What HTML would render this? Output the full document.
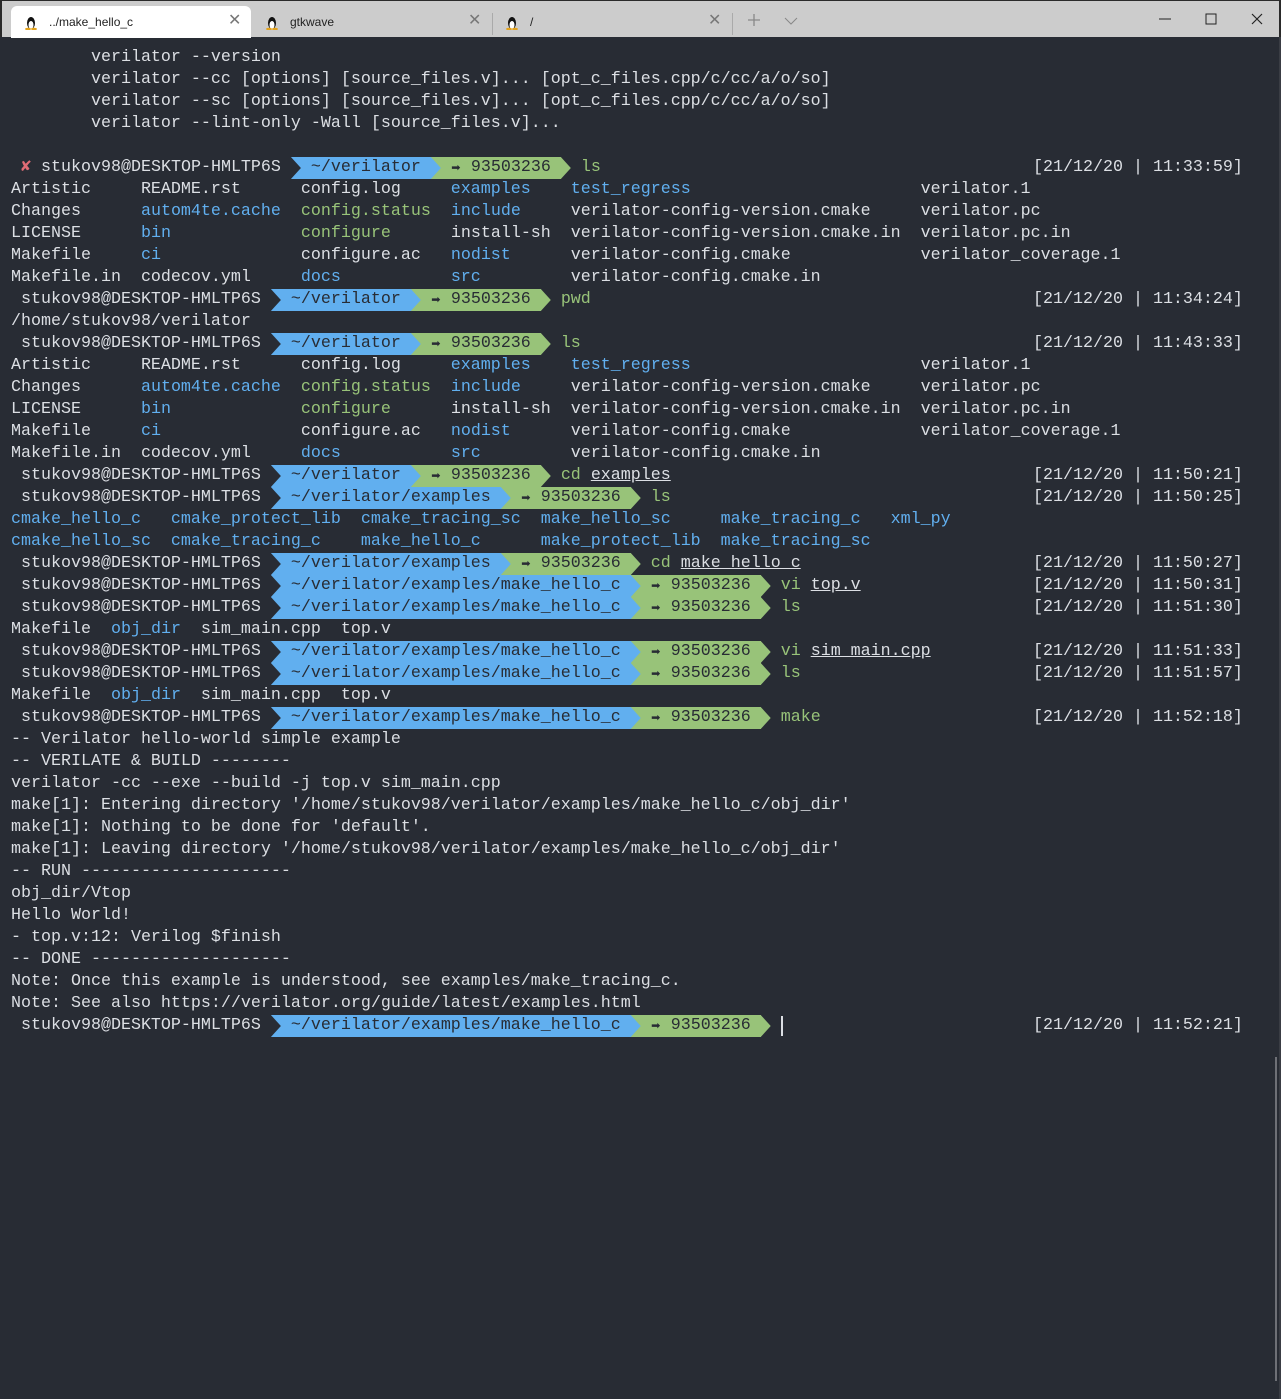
<!DOCTYPE html>
<html><head><meta charset="utf-8"><style>
*{margin:0;padding:0;box-sizing:border-box}
body{width:1281px;height:1399px;background:#282c34;position:relative;overflow:hidden;font-family:"Liberation Mono","DejaVu Sans Mono",monospace;}
#bar{position:absolute;left:0;top:0;width:1281px;height:37px;background:#cccccc;border-top:1px solid #2a2a2a;border-left:2px solid #2a2a2a;border-right:2px solid #2a2a2a}
.tab{position:absolute;top:5px;height:32px;font-family:"Liberation Sans",sans-serif;font-size:12px;color:#222;line-height:32px}
.tab.act{background:#fff;border-radius:6px 6px 0 0;left:9px;width:240px}
.peng{position:absolute;top:9px;width:12px;height:15px}
.x{position:absolute;font-family:"Liberation Sans",sans-serif;color:#777;font-size:16px;top:9px}
#term{position:absolute;left:0;top:3px;width:1281px;height:1396px}
.t{position:absolute;left:11px;white-space:pre;font-size:16.67px;line-height:22px;height:22px;color:#dcdfe4}
.bl{color:#61afef}.gr{color:#98c379}.rd{color:#e06c75}.u{text-decoration:underline}
.b,.g{display:inline-block;height:22px;vertical-align:top}
.b{background:#61afef;color:#282c34}.g{background:#98c379;color:#282c34}
.ar{display:inline-block;width:10px;height:22px;vertical-align:top;position:relative}
.ar::before{content:"";position:absolute;left:0;top:0;width:10px;height:22px;clip-path:polygon(0 0,100% 50%,0 100%)}
.n{background:#61afef}.n::before{background:#282c34}
.a{background:#98c379}.a::before{background:#61afef}
.e::before{background:#98c379}
.r{display:inline-block;width:10px;text-align:center;font-family:"DejaVu Sans",sans-serif;font-size:11px}
.ts{position:absolute;left:1033px;white-space:pre;font-size:16.67px;line-height:22px;color:#dcdfe4}
</style></head><body>
<div id="bar">
 <div class="tab act">
  <svg class="peng" style="left:14px" viewBox="0 0 12 15"><ellipse cx="6" cy="8" rx="4" ry="6" fill="#111"/><ellipse cx="6" cy="10" rx="2.5" ry="4" fill="#fff"/><ellipse cx="3" cy="14" rx="3" ry="1.3" fill="#e3a21a"/><ellipse cx="9" cy="14" rx="3" ry="1.3" fill="#e3a21a"/></svg>
  <span style="position:absolute;left:38px">../make_hello_c</span>
  <span class="x" style="left:217px;top:0;line-height:30px">✕</span>
 </div>
 <div class="tab" style="left:260px;width:230px">
  <svg class="peng" style="left:4px" viewBox="0 0 12 15"><ellipse cx="6" cy="8" rx="4" ry="6" fill="#111"/><ellipse cx="6" cy="10" rx="2.5" ry="4" fill="#fff"/><ellipse cx="3" cy="14" rx="3" ry="1.3" fill="#e3a21a"/><ellipse cx="9" cy="14" rx="3" ry="1.3" fill="#e3a21a"/></svg>
  <span style="position:absolute;left:28px">gtkwave</span>
  <span class="x" style="left:206px;top:0;line-height:30px">✕</span>
 </div>
 <div style="position:absolute;left:490px;top:12px;width:1px;height:22px;background:#aaa"></div>
 <div class="tab" style="left:500px;width:230px">
  <svg class="peng" style="left:4px" viewBox="0 0 12 15"><ellipse cx="6" cy="8" rx="4" ry="6" fill="#111"/><ellipse cx="6" cy="10" rx="2.5" ry="4" fill="#fff"/><ellipse cx="3" cy="14" rx="3" ry="1.3" fill="#e3a21a"/><ellipse cx="9" cy="14" rx="3" ry="1.3" fill="#e3a21a"/></svg>
  <span style="position:absolute;left:28px">/</span>
  <span class="x" style="left:206px;top:0;line-height:30px">✕</span>
 </div>
 <div style="position:absolute;left:730px;top:12px;width:1px;height:22px;background:#aaa"></div>
 <svg style="position:absolute;left:745px;top:12px" width="14" height="14"><path d="M7 1V13M1 7H13" stroke="#888" stroke-width="1.3"/></svg>
 <svg style="position:absolute;left:782px;top:15px" width="14" height="10"><path d="M1 2L7 8L13 2" stroke="#888" fill="none"/></svg>
 <svg style="position:absolute;left:1157px;top:17px" width="12" height="2"><path d="M0 1H12" stroke="#222"/></svg>
 <svg style="position:absolute;left:1203px;top:12px" width="12" height="12"><rect x="1" y="1" width="10" height="10" stroke="#222" fill="none"/></svg>
 <svg style="position:absolute;left:1249px;top:12px" width="12" height="12"><path d="M1 1L11 11M11 1L1 11" stroke="#222" stroke-width="1.2"/></svg>
</div>
<div style="position:absolute;left:1279px;top:37px;width:2px;height:1362px;background:#3a3d44"></div>
<div style="position:absolute;left:1275px;top:1057px;width:2px;height:324px;background:#6e7076"></div>

<div id="term">
<div class="t" style="top:44px">        verilator --version</div>
<div class="t" style="top:66px">        verilator --cc [options] [source_files.v]... [opt_c_files.cpp/c/cc/a/o/so]</div>
<div class="t" style="top:88px">        verilator --sc [options] [source_files.v]... [opt_c_files.cpp/c/cc/a/o/so]</div>
<div class="t" style="top:110px">        verilator --lint-only -Wall [source_files.v]...</div>

<div class="t" style="top:154px"> <span class="rd">✘</span> stukov98@DESKTOP-HMLTP6S <span class="ar n"></span><span class="b"> ~/verilator </span><span class="ar a"></span><span class="g"> <span class="r">➡</span> 93503236 </span><span class="ar e"></span> <span class="gr">ls</span></div>
<div class="ts" style="top:154px">[21/12/20 | 11:33:59]</div>
<div class="t" style="top:176px">Artistic     README.rst      config.log     <span class="bl">examples</span>    <span class="bl">test_regress</span>                       verilator.1</div>
<div class="t" style="top:198px">Changes      <span class="bl">autom4te.cache</span>  <span class="gr">config.status</span>  <span class="bl">include</span>     verilator-config-version.cmake     verilator.pc</div>
<div class="t" style="top:220px">LICENSE      <span class="bl">bin</span>             <span class="gr">configure</span>      install-sh  verilator-config-version.cmake.in  verilator.pc.in</div>
<div class="t" style="top:242px">Makefile     <span class="bl">ci</span>              configure.ac   <span class="bl">nodist</span>      verilator-config.cmake             verilator_coverage.1</div>
<div class="t" style="top:264px">Makefile.in  codecov.yml     <span class="bl">docs</span>           <span class="bl">src</span>         verilator-config.cmake.in</div>
<div class="t" style="top:286px"> stukov98@DESKTOP-HMLTP6S <span class="ar n"></span><span class="b"> ~/verilator </span><span class="ar a"></span><span class="g"> <span class="r">➡</span> 93503236 </span><span class="ar e"></span> <span class="gr">pwd</span></div>
<div class="ts" style="top:286px">[21/12/20 | 11:34:24]</div>
<div class="t" style="top:308px">/home/stukov98/verilator</div>
<div class="t" style="top:330px"> stukov98@DESKTOP-HMLTP6S <span class="ar n"></span><span class="b"> ~/verilator </span><span class="ar a"></span><span class="g"> <span class="r">➡</span> 93503236 </span><span class="ar e"></span> <span class="gr">ls</span></div>
<div class="ts" style="top:330px">[21/12/20 | 11:43:33]</div>
<div class="t" style="top:352px">Artistic     README.rst      config.log     <span class="bl">examples</span>    <span class="bl">test_regress</span>                       verilator.1</div>
<div class="t" style="top:374px">Changes      <span class="bl">autom4te.cache</span>  <span class="gr">config.status</span>  <span class="bl">include</span>     verilator-config-version.cmake     verilator.pc</div>
<div class="t" style="top:396px">LICENSE      <span class="bl">bin</span>             <span class="gr">configure</span>      install-sh  verilator-config-version.cmake.in  verilator.pc.in</div>
<div class="t" style="top:418px">Makefile     <span class="bl">ci</span>              configure.ac   <span class="bl">nodist</span>      verilator-config.cmake             verilator_coverage.1</div>
<div class="t" style="top:440px">Makefile.in  codecov.yml     <span class="bl">docs</span>           <span class="bl">src</span>         verilator-config.cmake.in</div>
<div class="t" style="top:462px"> stukov98@DESKTOP-HMLTP6S <span class="ar n"></span><span class="b"> ~/verilator </span><span class="ar a"></span><span class="g"> <span class="r">➡</span> 93503236 </span><span class="ar e"></span> <span class="gr">cd</span> <span class="u">examples</span></div>
<div class="ts" style="top:462px">[21/12/20 | 11:50:21]</div>
<div class="t" style="top:484px"> stukov98@DESKTOP-HMLTP6S <span class="ar n"></span><span class="b"> ~/verilator/examples </span><span class="ar a"></span><span class="g"> <span class="r">➡</span> 93503236 </span><span class="ar e"></span> <span class="gr">ls</span></div>
<div class="ts" style="top:484px">[21/12/20 | 11:50:25]</div>
<div class="t bl" style="top:506px">cmake_hello_c   cmake_protect_lib  cmake_tracing_sc  make_hello_sc     make_tracing_c   xml_py</div>
<div class="t bl" style="top:528px">cmake_hello_sc  cmake_tracing_c    make_hello_c      make_protect_lib  make_tracing_sc</div>
<div class="t" style="top:550px"> stukov98@DESKTOP-HMLTP6S <span class="ar n"></span><span class="b"> ~/verilator/examples </span><span class="ar a"></span><span class="g"> <span class="r">➡</span> 93503236 </span><span class="ar e"></span> <span class="gr">cd</span> <span class="u">make_hello_c</span></div>
<div class="ts" style="top:550px">[21/12/20 | 11:50:27]</div>
<div class="t" style="top:572px"> stukov98@DESKTOP-HMLTP6S <span class="ar n"></span><span class="b"> ~/verilator/examples/make_hello_c </span><span class="ar a"></span><span class="g"> <span class="r">➡</span> 93503236 </span><span class="ar e"></span> <span class="gr">vi</span> <span class="u">top.v</span></div>
<div class="ts" style="top:572px">[21/12/20 | 11:50:31]</div>
<div class="t" style="top:594px"> stukov98@DESKTOP-HMLTP6S <span class="ar n"></span><span class="b"> ~/verilator/examples/make_hello_c </span><span class="ar a"></span><span class="g"> <span class="r">➡</span> 93503236 </span><span class="ar e"></span> <span class="gr">ls</span></div>
<div class="ts" style="top:594px">[21/12/20 | 11:51:30]</div>
<div class="t" style="top:616px">Makefile  <span class="bl">obj_dir</span>  sim_main.cpp  top.v</div>
<div class="t" style="top:638px"> stukov98@DESKTOP-HMLTP6S <span class="ar n"></span><span class="b"> ~/verilator/examples/make_hello_c </span><span class="ar a"></span><span class="g"> <span class="r">➡</span> 93503236 </span><span class="ar e"></span> <span class="gr">vi</span> <span class="u">sim_main.cpp</span></div>
<div class="ts" style="top:638px">[21/12/20 | 11:51:33]</div>
<div class="t" style="top:660px"> stukov98@DESKTOP-HMLTP6S <span class="ar n"></span><span class="b"> ~/verilator/examples/make_hello_c </span><span class="ar a"></span><span class="g"> <span class="r">➡</span> 93503236 </span><span class="ar e"></span> <span class="gr">ls</span></div>
<div class="ts" style="top:660px">[21/12/20 | 11:51:57]</div>
<div class="t" style="top:682px">Makefile  <span class="bl">obj_dir</span>  sim_main.cpp  top.v</div>
<div class="t" style="top:704px"> stukov98@DESKTOP-HMLTP6S <span class="ar n"></span><span class="b"> ~/verilator/examples/make_hello_c </span><span class="ar a"></span><span class="g"> <span class="r">➡</span> 93503236 </span><span class="ar e"></span> <span class="gr">make</span></div>
<div class="ts" style="top:704px">[21/12/20 | 11:52:18]</div>
<div class="t" style="top:726px">-- Verilator hello-world simple example</div>
<div class="t" style="top:748px">-- VERILATE &amp; BUILD --------</div>
<div class="t" style="top:770px">verilator -cc --exe --build -j top.v sim_main.cpp</div>
<div class="t" style="top:792px">make[1]: Entering directory '/home/stukov98/verilator/examples/make_hello_c/obj_dir'</div>
<div class="t" style="top:814px">make[1]: Nothing to be done for 'default'.</div>
<div class="t" style="top:836px">make[1]: Leaving directory '/home/stukov98/verilator/examples/make_hello_c/obj_dir'</div>
<div class="t" style="top:858px">-- RUN ---------------------</div>
<div class="t" style="top:880px">obj_dir/Vtop</div>
<div class="t" style="top:902px">Hello World!</div>
<div class="t" style="top:924px">- top.v:12: Verilog $finish</div>
<div class="t" style="top:946px">-- DONE --------------------</div>
<div class="t" style="top:968px">Note: Once this example is understood, see examples/make_tracing_c.</div>
<div class="t" style="top:990px">Note: See also https://verilator.org/guide/latest/examples.html</div>
<div class="t" style="top:1012px"> stukov98@DESKTOP-HMLTP6S <span class="ar n"></span><span class="b"> ~/verilator/examples/make_hello_c </span><span class="ar a"></span><span class="g"> <span class="r">➡</span> 93503236 </span><span class="ar e"></span> <span style="display:inline-block;width:2px;height:20px;background:#dcdfe4;vertical-align:top;margin-top:1px"></span></div>
<div class="ts" style="top:1012px">[21/12/20 | 11:52:21]</div>
</div>
</body></html>
